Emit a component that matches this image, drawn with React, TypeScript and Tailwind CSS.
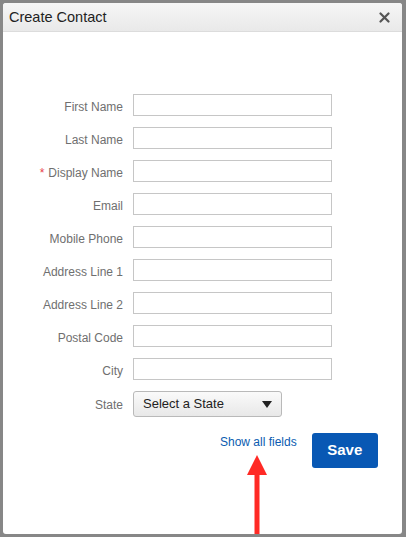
const fields = [
  { label: "First Name" },
  { label: "Last Name" },
  { label: "Display Name", required: true },
  { label: "Email" },
  { label: "Mobile Phone" },
  { label: "Address Line 1" },
  { label: "Address Line 2" },
  { label: "Postal Code" },
  { label: "City" },
];

export default function App() {
  return (
    <div
      className="h-[537px] w-[406px] overflow-hidden bg-[#878787] p-[3px] pr-[4px]"
      style={{ fontFamily: '"Liberation Sans", Arial, sans-serif' }}
    >
      <div className="relative flex h-[531px] flex-col overflow-hidden rounded-[3px] bg-white">
        <div className="flex h-[29px] shrink-0 items-center justify-between border-b border-[#dcdcdc] bg-gradient-to-b from-[#f6f6f6] to-[#e9e9e9] pl-[6px] pr-[10px]">
          <h2 className="pt-[1px] text-[14.5px] leading-none text-[#222]">Create Contact</h2>
          <button type="button" className="flex h-4 w-4 items-center justify-center text-[#555]">
            <svg width="11" height="11" viewBox="0 0 11 11">
              <path d="M1.5 1.5 L9.5 9.5 M9.5 1.5 L1.5 9.5" stroke="currentColor" strokeWidth="2.2" strokeLinecap="round" />
            </svg>
          </button>
        </div>

        <div className="flex flex-col gap-[11px] pt-[62px]">
          {fields.map((f) => (
            <div key={f.label} className="flex items-center">
              <label className="w-[120px] translate-y-[2px] text-right text-[12px] text-[#6f6f6f]">
                {f.required ? <span className="mr-[4px] text-[#e8434e]">*</span> : null}
                {f.label}
              </label>
              <input
                type="text"
                className="ml-[10px] h-[22px] w-[199px] border border-[#c6c6c6] bg-white outline-none"
              />
            </div>
          ))}
          <div className="flex items-center">
            <label className="w-[120px] translate-y-[1px] text-right text-[12px] text-[#6f6f6f]">State</label>
            <div className="ml-[10px] flex h-[26px] w-[149px] items-center justify-between rounded-[3px] border border-[#b9b9b9] bg-gradient-to-b from-[#fafafa] to-[#e8e8e8] pl-[9px] pr-[9px]">
              <span className="text-[13px] text-[#222]">Select a State</span>
              <svg width="10" height="7" viewBox="0 0 10 7">
                <path d="M0 0 H10 L5 7 Z" fill="#222" />
              </svg>
            </div>
          </div>
        </div>

        <div className="mt-[16px] flex items-center">
          <a className="ml-[217px] mt-[-17px] text-[12px] text-[#0b5bb0]">Show all fields</a>
          <button
            type="button"
            className="ml-[15px] flex h-[35px] w-[66px] items-center justify-center rounded-[3px] bg-[#0858b4] text-[15px] font-bold text-white"
          >
            Save
          </button>
        </div>

        <svg className="absolute left-[243px] top-[452px]" width="22" height="80" viewBox="0 0 22 80">
          <path d="M11 0 L21 20 H13.5 V80 H8.5 V20 H1 Z" fill="#ff2a25" />
        </svg>
      </div>
    </div>
  );
}
